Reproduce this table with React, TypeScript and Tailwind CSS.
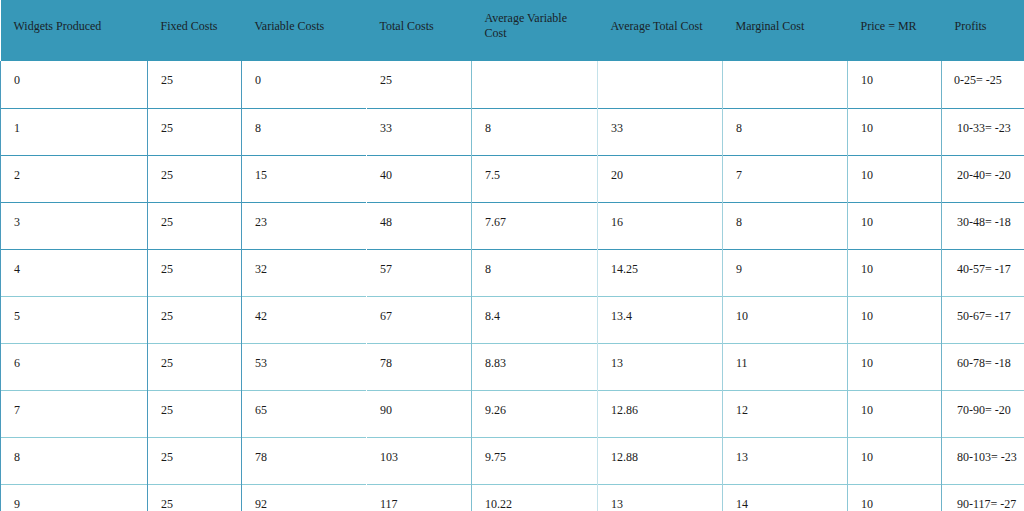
const headers = [
  'Widgets Produced',
  'Fixed Costs',
  'Variable Costs',
  'Total Costs',
  'Average Variable Cost',
  'Average Total Cost',
  'Marginal Cost',
  'Price = MR',
  'Profits',
]

const rows: string[][] = [
  ['0', '25', '0', '25', '', '', '', '10', '0-25= -25'],
  ['1', '25', '8', '33', '8', '33', '8', '10', '10-33= -23'],
  ['2', '25', '15', '40', '7.5', '20', '7', '10', '20-40= -20'],
  ['3', '25', '23', '48', '7.67', '16', '8', '10', '30-48= -18'],
  ['4', '25', '32', '57', '8', '14.25', '9', '10', '40-57= -17'],
  ['5', '25', '42', '67', '8.4', '13.4', '10', '10', '50-67= -17'],
  ['6', '25', '53', '78', '8.83', '13', '11', '10', '60-78= -18'],
  ['7', '25', '65', '90', '9.26', '12.86', '12', '10', '70-90= -20'],
  ['8', '25', '78', '103', '9.75', '12.88', '13', '10', '80-103= -23'],
  ['9', '25', '92', '117', '10.22', '13', '14', '10', '90-117= -27'],
]

const widths = [147, 94, 125, 105, 126, 125, 125, 94, 83]

// right-hand border of each column
const colBorder = [
  'border-r border-r-[#4a9bbd]',
  'border-r border-r-[#4a9bbd]',
  'border-r border-r-white',
  'border-r border-r-[#7fbfd0]',
  'border-r border-r-[#c4e2ea]',
  'border-r border-r-[#9fd0dc]',
  'border-r border-r-[#8cc7d6]',
  'border-r border-r-[#6fb3c9]',
  'border-r border-r-transparent',
]

export default function App() {
  return (
    <div className="min-h-[511px] bg-white font-['Liberation_Serif',serif] text-[12px] text-[#1a1a1a]">
      <table className="w-[1024px] table-fixed border-collapse">
        <colgroup>
          {widths.map((w, i) => (
            <col key={i} style={{ width: w }} />
          ))}
        </colgroup>
        <thead>
          <tr className="h-[61px] bg-[#3798b8] text-[#1a2328]">
            {headers.map(h => (
              <th
                key={h}
                className="px-[13px] pb-[9px] text-left align-middle font-normal leading-[15px]"
              >
                {h}
              </th>
            ))}
          </tr>
        </thead>
        <tbody>
          {rows.map((r, ri) => (
            <tr
              key={ri}
              className={`h-[47px] border-b ${
                ri < 4 ? 'border-b-[#3d98b9]' : 'border-b-[#8ccbd6]'
              }`}
            >
              {r.map((c, ci) => (
                <td
                  key={ci}
                  className={`pb-[7px] align-middle leading-[15px] whitespace-nowrap ${colBorder[ci]} ${
                    ci === 0 ? 'border-l border-l-[#4a9bbd]' : ''
                  } ${ci === 8 ? (ri > 0 ? 'pl-[15px] pr-0' : 'pl-[12px] pr-0') : 'px-[13px]'}`}
                >
                  {c}
                </td>
              ))}
            </tr>
          ))}
        </tbody>
      </table>
    </div>
  )
}
